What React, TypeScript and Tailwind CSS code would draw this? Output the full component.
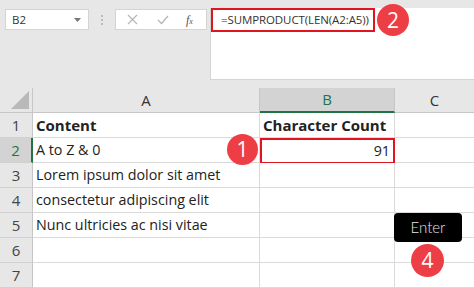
import React from "react";

const rows: { n: number; a: string; b: string; bold?: boolean }[] = [
  { n: 1, a: "Content", b: "Character Count", bold: true },
  { n: 2, a: "A to Z & 0", b: "91" },
  { n: 3, a: "Lorem ipsum dolor sit amet", b: "" },
  { n: 4, a: "consectetur adipiscing elit", b: "" },
  { n: 5, a: "Nunc ultricies ac nisi vitae", b: "" },
  { n: 6, a: "", b: "" },
  { n: 7, a: "", b: "" },
];

function Badge({ n, className }: { n: number; className: string }) {
  return (
    <div
      className={`absolute flex items-center justify-center rounded-full bg-[#ee3e45] text-white text-[21px] leading-none ${className}`}
      style={{ fontFamily: "'Open Sans', sans-serif" }}
    >
      {n}
    </div>
  );
}

export default function App() {
  return (
    <div
      className="relative w-[474px] h-[288px] overflow-hidden bg-white text-[#222]"
      style={{ fontFamily: "'Open Sans', 'Noto Sans', sans-serif" }}
    >
      {/* top bar */}
      <div className="h-[88px] bg-[#e7e7e7] flex items-start pt-[8px]">
        <div className="ml-[5px] mt-[1px] w-[84px] h-[21px] bg-white border border-[#d4d4d4] flex items-center justify-between pl-[6px] pr-[7px]">
          <span className="text-[11.5px] text-[#333]">B2</span>
          <svg width="7" height="4" viewBox="0 0 7 4">
            <polygon points="0,0 7,0 3.5,4" fill="#777" />
          </svg>
        </div>
        <div className="w-[26px] h-[22px] flex flex-col items-center justify-center gap-[2px] mt-[1px]">
          <div className="w-[2px] h-[2px] bg-[#bbb]" />
          <div className="w-[2px] h-[2px] bg-[#bbb]" />
          <div className="w-[2px] h-[2px] bg-[#bbb]" />
        </div>
        <div className="w-[92px] mt-[1px] h-[21px] bg-white border border-[#d4d4d4] flex items-center">
          <svg className="ml-[11px]" width="11" height="11" viewBox="0 0 11 11">
            <path d="M1 1 L10 10 M10 1 L1 10" stroke="#b5b5b5" strokeWidth="1.2" />
          </svg>
          <svg className="ml-[19px]" width="12" height="10" viewBox="0 0 12 10">
            <path d="M1 5 L4.5 8.5 L11 1" stroke="#b5b5b5" strokeWidth="1.2" fill="none" />
          </svg>
          <span
            className="ml-[17px] text-[12px] italic text-[#555]"
            style={{ fontFamily: "'Liberation Serif', serif" }}
          >
            f<span className="text-[8px]">x</span>
          </span>
        </div>
        <div className="ml-[3px] flex-1 h-[72px] bg-white border-l border-b border-[#d4d4d4]">
          <div className="w-[164px] h-[24px] border-2 border-[#e0151f] flex items-center pl-[8px]">
            <span className="text-[11.5px] text-[#333] whitespace-nowrap tracking-[-0.1px]">
              =SUMPRODUCT(LEN(A2:A5))
            </span>
          </div>
        </div>
      </div>

      {/* grid */}
      <div className="grid grid-cols-[33px_227px_135px_79px] grid-rows-[25px_repeat(7,25px)]">
        {/* header row */}
        <div className="bg-[#e7e7e7] border-r border-b border-[#c6c6c6] relative">
          <svg className="absolute right-[3px] bottom-[3px]" width="18" height="18" viewBox="0 0 18 18">
            <polygon points="18,0 18,18 0,18" fill="#b9b9b9" />
          </svg>
        </div>
        <div className="bg-[#e7e7e7] border-r border-b border-[#c6c6c6] flex items-center justify-center text-[15px] text-[#333]">
          A
        </div>
        <div className="bg-[#d3d3d3] border-r border-[#c6c6c6] border-b-2 border-b-[#217346] flex items-center justify-center text-[15px] text-[#217346]">
          B
        </div>
        <div className="bg-[#e7e7e7] border-b border-[#c6c6c6] flex items-center justify-center text-[15px] text-[#333]">
          C
        </div>

        {rows.map((r) => (
          <React.Fragment key={r.n}>
            <div
              className={`border-b border-[#d0d0d0] flex items-center justify-center text-[15px] ${
                r.n === 2
                  ? "bg-[#d3d3d3] border-r-2 border-r-[#217346] text-[#217346]"
                  : "bg-[#e7e7e7] border-r border-r-[#c6c6c6] text-[#444]"
              }`}
            >
              {r.n}
            </div>
            <div
              className={`border-r border-b border-[#dadada] flex items-center pl-[3px] whitespace-nowrap ${
                r.bold ? "font-bold text-[15px]" : "text-[14.3px]"
              }`}
            >
              {r.a}
            </div>
            <div
              className={`border-b flex items-center whitespace-nowrap ${
                r.n === 2
                  ? "border-2 border-[#e0151f] justify-end pr-[3px]"
                  : "border-r border-[#dadada] pl-[3px]"
              } ${r.bold ? "font-bold text-[15px]" : "text-[14.3px]"}`}
            >
              {r.b}
            </div>
            <div className="border-b border-[#dadada]" />
          </React.Fragment>
        ))}
      </div>

      {/* overlays */}
      <Badge n={2} className="left-[377px] top-[4px] w-[32px] h-[32px]" />
      <Badge n={1} className="left-[227px] top-[134px] w-[31px] h-[31px]" />
      <div
        className="absolute left-[394px] top-[213px] w-[68px] h-[29px] rounded-[4px] bg-black text-[#e6e6e6] text-[15px] font-light flex items-center justify-center"
        style={{ fontFamily: "'Lato', sans-serif" }}
      >
        Enter
      </div>
      <Badge n={4} className="left-[411px] top-[244px] w-[33px] h-[33px]" />
    </div>
  );
}
